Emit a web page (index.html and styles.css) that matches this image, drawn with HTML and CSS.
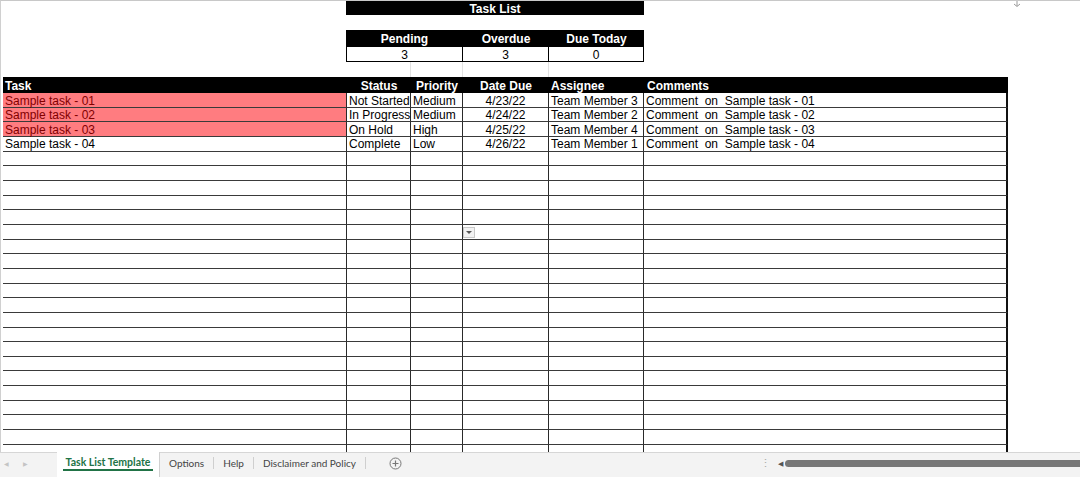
FILE: index.html
```html
<!DOCTYPE html>
<html>
<head>
<meta charset="utf-8">
<link rel="stylesheet" href="styles.css">
</head>
<body>
<div class="sheet">
  <div class="top">
    <div class="title">Task List</div>
    <div class="summary">
      <div class="sh">Pending</div><div class="sh">Overdue</div><div class="sh">Due Today</div>
      <div class="sv first">3</div><div class="sv">3</div><div class="sv">0</div>
    </div>
  </div>
  <div class="row spacer"><div></div><div class="fl"></div><div class="fl"></div><div class="fl"></div><div></div><div></div></div>
  <div class="row head">
    <div class="c">Task</div><div class="c ctr">Status</div><div class="c ctr">Priority</div><div class="c ctr">Date Due</div><div class="c">Assignee</div><div class="c">Comments</div>
  </div>
  <div class="row data">
    <div class="c hot">Sample task - 01</div><div class="c">Not Started</div><div class="c">Medium</div><div class="c ctr">4/23/22</div><div class="c">Team Member 3</div><div class="c">Comment &nbsp;on &nbsp;Sample task - 01</div>
  </div>
  <div class="row data">
    <div class="c hot">Sample task - 02</div><div class="c">In Progress</div><div class="c">Medium</div><div class="c ctr">4/24/22</div><div class="c">Team Member 2</div><div class="c">Comment &nbsp;on &nbsp;Sample task - 02</div>
  </div>
  <div class="row data">
    <div class="c hot">Sample task - 03</div><div class="c">On Hold</div><div class="c">High</div><div class="c ctr">4/25/22</div><div class="c">Team Member 4</div><div class="c">Comment &nbsp;on &nbsp;Sample task - 03</div>
  </div>
  <div class="row data">
    <div class="c">Sample task - 04</div><div class="c">Complete</div><div class="c">Low</div><div class="c ctr">4/26/22</div><div class="c">Team Member 1</div><div class="c">Comment &nbsp;on &nbsp;Sample task - 04</div>
  </div>
  <div class="row data"><div class="c"></div><div class="c"></div><div class="c"></div><div class="c"></div><div class="c"></div><div class="c"></div></div>
  <div class="row data"><div class="c"></div><div class="c"></div><div class="c"></div><div class="c"></div><div class="c"></div><div class="c"></div></div>
  <div class="row data"><div class="c"></div><div class="c"></div><div class="c"></div><div class="c"></div><div class="c"></div><div class="c"></div></div>
  <div class="row data"><div class="c"></div><div class="c"></div><div class="c"></div><div class="c"></div><div class="c"></div><div class="c"></div></div>
  <div class="row data"><div class="c"></div><div class="c"></div><div class="c"></div><div class="c"></div><div class="c"></div><div class="c"></div></div>
  <div class="row data"><div class="c"></div><div class="c"></div><div class="c"></div><div class="c dd"><span class="ddbtn"><span class="tri"></span></span></div><div class="c"></div><div class="c"></div></div>
  <div class="row data"><div class="c"></div><div class="c"></div><div class="c"></div><div class="c"></div><div class="c"></div><div class="c"></div></div>
  <div class="row data"><div class="c"></div><div class="c"></div><div class="c"></div><div class="c"></div><div class="c"></div><div class="c"></div></div>
  <div class="row data"><div class="c"></div><div class="c"></div><div class="c"></div><div class="c"></div><div class="c"></div><div class="c"></div></div>
  <div class="row data"><div class="c"></div><div class="c"></div><div class="c"></div><div class="c"></div><div class="c"></div><div class="c"></div></div>
  <div class="row data"><div class="c"></div><div class="c"></div><div class="c"></div><div class="c"></div><div class="c"></div><div class="c"></div></div>
  <div class="row data"><div class="c"></div><div class="c"></div><div class="c"></div><div class="c"></div><div class="c"></div><div class="c"></div></div>
  <div class="row data"><div class="c"></div><div class="c"></div><div class="c"></div><div class="c"></div><div class="c"></div><div class="c"></div></div>
  <div class="row data"><div class="c"></div><div class="c"></div><div class="c"></div><div class="c"></div><div class="c"></div><div class="c"></div></div>
  <div class="row data"><div class="c"></div><div class="c"></div><div class="c"></div><div class="c"></div><div class="c"></div><div class="c"></div></div>
  <div class="row data"><div class="c"></div><div class="c"></div><div class="c"></div><div class="c"></div><div class="c"></div><div class="c"></div></div>
  <div class="row data"><div class="c"></div><div class="c"></div><div class="c"></div><div class="c"></div><div class="c"></div><div class="c"></div></div>
  <div class="row data"><div class="c"></div><div class="c"></div><div class="c"></div><div class="c"></div><div class="c"></div><div class="c"></div></div>
  <div class="row data"><div class="c"></div><div class="c"></div><div class="c"></div><div class="c"></div><div class="c"></div><div class="c"></div></div>
  <div class="row data"><div class="c"></div><div class="c"></div><div class="c"></div><div class="c"></div><div class="c"></div><div class="c"></div></div>
  <div class="row data"><div class="c"></div><div class="c"></div><div class="c"></div><div class="c"></div><div class="c"></div><div class="c"></div></div>
  <svg class="corner" width="12" height="6" viewBox="0 0 12 6"><path d="M6 0v5M3 3l3 2.5L9 3" fill="none" stroke="#9a9a9a" stroke-width="1"/></svg>
</div>
<div class="tabs">
  <div class="nav"><span class="arr">◀</span><span class="arr">▶</span></div>
  <div class="tab active"><span>Task List Template</span></div>
  <div class="tab">Options</div>
  <div class="sep"></div>
  <div class="tab">Help</div>
  <div class="sep"></div>
  <div class="tab">Disclaimer and Policy</div>
  <div class="sep"></div>
  <div class="add">
    <svg width="13" height="13" viewBox="0 0 13 13"><circle cx="6.5" cy="6.5" r="5.5" fill="none" stroke="#777" stroke-width="1"/><path d="M6.5 3.5v6M3.5 6.5h6" stroke="#777" stroke-width="1.2"/></svg>
  </div>
  <div class="fill"></div>
  <div class="dots">⋮</div>
  <div class="scroll"><span class="sarr">◀</span><div class="thumb"></div></div>
</div>
</body>
</html>
```
FILE: styles.css
```css
* { box-sizing: border-box; }
html, body { margin: 0; padding: 0; background: #fff; }
body {
  width: 1080px;
  height: 477px;
  overflow: hidden;
  font-family: "Liberation Sans", Arial, sans-serif;
  font-size: 12px;
  color: #000;
}
.sheet {
  position: relative;
  height: 452px;
  overflow: hidden;
  border-top: 1px solid #c8c8c8;
  border-left: 1px solid #d0d0d0;
  padding-left: 2px;
}
.top {
  margin-left: 343px;
  width: 298px;
}
.title {
  height: 14px;
  line-height: 16px;
  background: #000;
  color: #fff;
  font-weight: bold;
  text-align: center;
}
.summary {
  margin-top: 15px;
  display: grid;
  grid-template-columns: 117px 86px 95px;
}
.sh {
  height: 17px;
  line-height: 19px;
  background: #000;
  color: #fff;
  font-weight: bold;
  text-align: center;
}
.sv {
  height: 15px;
  line-height: 16px;
  text-align: center;
  border-right: 1px solid #000;
  border-bottom: 1px solid #000;
}
.sv.first { border-left: 1px solid #000; }
.row {
  display: grid;
  grid-template-columns: 344px 64px 52px 86px 95px 364px;
}
.spacer { height: 15px; }
.spacer .fl { border-right: 1px solid #e2e2e2; }
.head {
  height: 16px;
  background: #000;
  color: #fff;
  font-weight: bold;
  width: 1005px;
}
.head .c { line-height: 18px; padding-left: 2px; }
.head .c:last-child { padding-left: 3px; }
.head .ctr { padding-left: 0; }
.data {
  height: 14.667px;
  grid-template-rows: 14.667px;
}
.data .c {
  border-right: 1px solid #2a2a2a;
  border-bottom: 1px solid #3a3a3a;
  line-height: 13px;
  padding-top: 1.5px;
  padding-left: 2px;
  white-space: nowrap;
  min-height: 0;
}
.data .c:last-child { border-right: 2px solid #111; padding-left: 2px; }
.c.ctr { text-align: center; padding-left: 0; }
.c.hot { background: #ff7c80; color: #820000; }
.dd { position: relative; }
.ddbtn {
  position: absolute;
  left: 0;
  top: 2px;
  width: 12px;
  height: 11px;
  background: #f2f2f2;
  border: 1px solid #c8c8c8;
  display: flex;
  align-items: center;
  justify-content: center;
}
.tri {
  width: 0; height: 0;
  border-left: 3px solid transparent;
  border-right: 3px solid transparent;
  border-top: 3px solid #555;
}
.corner {
  position: absolute;
  left: 1010px;
  top: 0;
}
.tabs {
  height: 25px;
  background: #f3f3f3;
  border-top: 1px solid #d6d6d6;
  display: flex;
  align-items: stretch;
  font-family: Lato, "Open Sans", sans-serif;
  font-size: 10px;
  color: #444;
}
.nav {
  width: 57px;
  display: flex;
  align-items: center;
  gap: 14px;
  padding-left: 4px;
  padding-bottom: 4px;
  color: #c4c4c4;
  font-size: 6px;
}
.tab {
  display: flex;
  align-items: center;
  padding: 0 9px;
  padding-bottom: 4px;
}
.tab.active {
  width: 103px;
  justify-content: center;
  background: #fff;
  border-right: 1px solid #d0d0d0;
  color: #217346;
  font-weight: bold;
  font-size: 10.5px;
  padding: 0;
  margin-top: -1px;
  padding-bottom: 4px;
}
.tab.active span {
  padding: 1px 3px 0;
  border-bottom: 2px solid #217346;
  line-height: 13px;
}
.sep {
  width: 1px;
  background: #cfcfcf;
  margin: 4px 0 8px;
}
.add {
  display: flex;
  align-items: center;
  padding: 0 0 4px 23px;
}
.fill { flex: 1; }
.dots {
  display: flex;
  align-items: center;
  color: #aaa;
  font-size: 11px;
  padding-bottom: 4px;
  width: 18px;
}
.scroll {
  width: 302px;
  display: flex;
  align-items: center;
  gap: 2px;
  padding-bottom: 4px;
}
.sarr { color: #555; font-size: 7px; }
.thumb {
  flex: 1;
  height: 7px;
  background: #777;
  border-radius: 4px 0 0 4px;
}
```
